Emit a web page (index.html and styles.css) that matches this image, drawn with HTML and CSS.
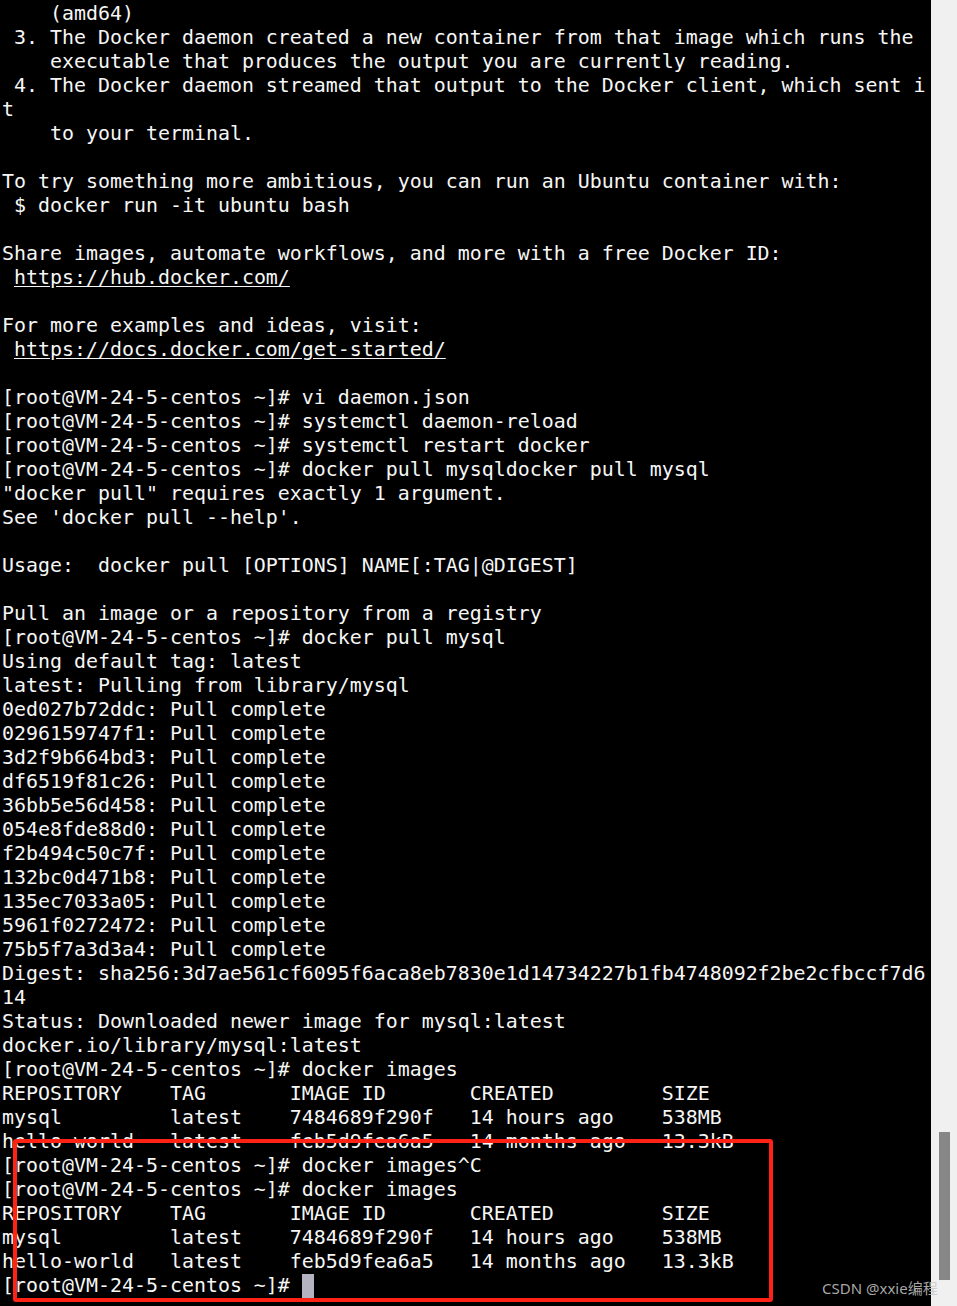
FILE: index.html
```html
<!DOCTYPE html>
<html lang="en">
<head>
<meta charset="utf-8">
<title>Terminal</title>
<link rel="stylesheet" href="styles.css">
</head>
<body>
<div class="window">
<pre class="term">    (amd64)
 3. The Docker daemon created a new container from that image which runs the
    executable that produces the output you are currently reading.
 4. The Docker daemon streamed that output to the Docker client, which sent i
t
    to your terminal.

To try something more ambitious, you can run an Ubuntu container with:
 $ docker run -it ubuntu bash

Share images, automate workflows, and more with a free Docker ID:
 <span class="link">https://hub.docker.com/</span>

For more examples and ideas, visit:
 <span class="link">https://docs.docker.com/get-started/</span>

[root@VM-24-5-centos ~]# vi daemon.json
[root@VM-24-5-centos ~]# systemctl daemon-reload
[root@VM-24-5-centos ~]# systemctl restart docker
[root@VM-24-5-centos ~]# docker pull mysqldocker pull mysql
"docker pull" requires exactly 1 argument.
See 'docker pull --help'.

Usage:  docker pull [OPTIONS] NAME[:TAG|@DIGEST]

Pull an image or a repository from a registry
[root@VM-24-5-centos ~]# docker pull mysql
Using default tag: latest
latest: Pulling from library/mysql
0ed027b72ddc: Pull complete
0296159747f1: Pull complete
3d2f9b664bd3: Pull complete
df6519f81c26: Pull complete
36bb5e56d458: Pull complete
054e8fde88d0: Pull complete
f2b494c50c7f: Pull complete
132bc0d471b8: Pull complete
135ec7033a05: Pull complete
5961f0272472: Pull complete
75b5f7a3d3a4: Pull complete
Digest: sha256:3d7ae561cf6095f6aca8eb7830e1d14734227b1fb4748092f2be2cfbccf7d6
14
Status: Downloaded newer image for mysql:latest
docker.io/library/mysql:latest
[root@VM-24-5-centos ~]# docker images
REPOSITORY    TAG       IMAGE ID       CREATED         SIZE
mysql         latest    7484689f290f   14 hours ago    538MB
hello-world   latest    feb5d9fea6a5   14 months ago   13.3kB
[root@VM-24-5-centos ~]# docker images^C
[root@VM-24-5-centos ~]# docker images
REPOSITORY    TAG       IMAGE ID       CREATED         SIZE
mysql         latest    7484689f290f   14 hours ago    538MB
hello-world   latest    feb5d9fea6a5   14 months ago   13.3kB
[root@VM-24-5-centos ~]# <span class="cursor"> </span></pre>
<div class="scrollbar"><div class="thumb"></div></div>
<div class="highlight"></div>
<div class="watermark">CSDN @xxie编程</div>
</div>
</body>
</html>
```
FILE: styles.css
```css
html, body {
  margin: 0;
  padding: 0;
  background: #000;
}
.window {
  position: relative;
  display: flex;
  width: 957px;
  height: 1306px;
  overflow: hidden;
}
.term {
  flex: 0 0 929px;
  margin: 0;
  padding: 2px 0 0 2px;
  background: #000;
  color: #f6f6f6;
  font-family: "DejaVu Sans Mono", monospace;
  font-size: 19.93px;
  line-height: 24px;
  white-space: pre;
  overflow: hidden;
}
.link {
  text-decoration: underline;
  text-underline-offset: 2px;
}
.cursor {
  display: inline-block;
  width: 12px;
  height: 24px;
  vertical-align: top;
  background: #b3b3c2;
}
.scrollbar {
  flex: 0 0 26px;
  background: #f0f0f0;
  display: flex;
  flex-direction: column;
  justify-content: flex-end;
  padding-bottom: 26px;
  box-sizing: border-box;
}
.thumb {
  width: 11px;
  height: 148px;
  margin-left: 8px;
  background: #878787;
}
.highlight {
  position: absolute;
  left: 13px;
  top: 1139px;
  width: 752px;
  height: 155px;
  border: 4px solid #ff2215;
  border-radius: 3px;
}
.watermark {
  position: absolute;
  left: 822px;
  top: 1278px;
  font-family: "Noto Sans", "Noto Sans CJK SC", sans-serif;
  font-size: 15px;
  line-height: 20px;
  color: rgba(200, 200, 200, 0.85);
  white-space: nowrap;
}
```
